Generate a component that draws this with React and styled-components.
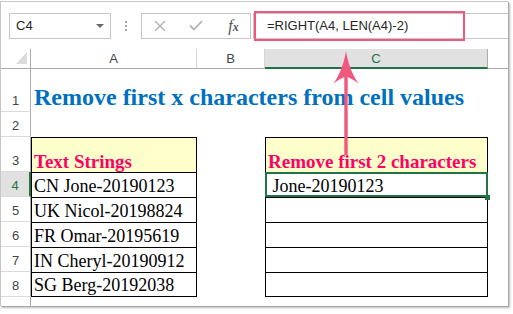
import React from "react"
import styled, { createGlobalStyle, css } from "styled-components"

const GREEN = "#217346"
const PINK = "#f0597f"

const GlobalStyle = createGlobalStyle`
  html, body {
    margin: 0;
    padding: 0;
    background: #fff;
  }
  body {
    width: 513px;
    height: 314px;
    overflow: hidden;
  }
`

const Window = styled.div`
  position: relative;
  box-sizing: border-box;
  margin-top: 1px;
  width: 508px;
  height: 305px;
  border-top: 1px solid #c6c6c6;
  border-left: 1px solid #c6c6c6;
  box-shadow: 1px 1px 0 #a9a9a9, 2px 2px 2px rgba(0, 0, 0, 0.28);
  display: flex;
  flex-direction: column;
  background: #fff;
  overflow: hidden;
`

const FormulaBar = styled.div`
  flex: none;
  height: 47px;
  display: flex;
  align-items: center;
  padding-left: 8px;
  font-family: "Liberation Sans", Arial, sans-serif;
  font-size: 13px;
  color: #262626;
`

const NameBox = styled.div`
  box-sizing: border-box;
  width: 102px;
  height: 26px;
  border: 1px solid #c6c6c6;
  display: flex;
  align-items: center;
  justify-content: space-between;
  padding: 0 6px 0 6px;
`

const DropArrow = styled.span`
  width: 0;
  height: 0;
  border-left: 4px solid transparent;
  border-right: 4px solid transparent;
  border-top: 4px solid #6a6a6a;
`

const Grip = styled.div`
  display: flex;
  flex-direction: column;
  gap: 2px;
  margin: 0 14px 0 14px;
  span {
    width: 2px;
    height: 2px;
    background: #a3a3a3;
  }
`

const ButtonBox = styled.div`
  box-sizing: border-box;
  width: 110px;
  height: 26px;
  border: 1px solid #c6c6c6;
  display: grid;
  grid-template-columns: repeat(3, 36px);
  align-items: center;
  justify-items: center;
`

const Fx = styled.span`
  font-family: "Liberation Serif", "Times New Roman", serif;
  font-style: italic;
  font-size: 16px;
  color: #555;
  margin-left: 3px;
  small {
    font-size: 12px;
    font-weight: bold;
  }
`

const FormulaBox = styled.div`
  position: relative;
  box-sizing: border-box;
  flex: 1;
  height: 26px;
  margin-left: 2px;
  border: 1px solid #c6c6c6;
  border-right: none;
  display: flex;
  align-items: center;
  padding-left: 13px;
  white-space: pre;
`

const Highlight = styled.div`
  position: absolute;
  left: 0;
  top: -3px;
  width: 211px;
  height: 30px;
  box-sizing: border-box;
  border: 2px solid ${PINK};
`

const Sheet = styled.div`
  flex: 1;
  min-height: 0;
  overflow: hidden;
  display: grid;
  grid-template-columns: 30px 166px 68px 223px 1fr;
  grid-template-rows: 20px 43px 25px 35px repeat(5, 25px) 25px;
`

const Corner = styled.div`
  box-sizing: border-box;
  border-right: 1px solid #ababab;
  border-bottom: 1px solid #ababab;
  display: flex;
  align-items: flex-end;
  justify-content: flex-end;
  padding: 0 3px 4px 0;
`

const Triangle = styled.div`
  width: 11px;
  height: 12px;
  background: #dcdcdc;
  clip-path: polygon(100% 0, 100% 100%, 0 100%);
`

const headFont = css`
  font-family: "Liberation Sans", Arial, sans-serif;
  font-size: 13px;
  line-height: 1;
  color: #444;
`

const ColHead = styled.div`
  box-sizing: border-box;
  ${headFont};
  display: flex;
  align-items: center;
  justify-content: center;
  border-bottom: 1px solid #ababab;
  border-right: ${p => (p.$last ? "none" : "1px solid #d6d6d6")};
  ${p =>
    p.$active &&
    css`
      background: #e1e1e1;
      color: ${GREEN};
      border-bottom: 2px solid ${GREEN};
      border-right: 1px solid #ababab;
    `}
`

const RowHead = styled.div`
  box-sizing: border-box;
  ${headFont};
  display: flex;
  align-items: flex-end;
  justify-content: center;
  padding-bottom: 4px;
  border-right: 1px solid #ababab;
  border-bottom: 1px solid #dadada;
  ${p =>
    p.$active &&
    css`
      background: #e1e1e1;
      color: ${GREEN};
      border-right: 2px solid ${GREEN};
    `}
`

const Cell = styled.div`
  box-sizing: border-box;
  min-width: 0;
  display: flex;
  align-items: flex-end;
  padding: 0 0 2px 2px;
  font-family: "Liberation Serif", "Times New Roman", serif;
  font-size: 18px;
  line-height: 1;
  color: #000;
  white-space: pre;
  background: ${p => (p.$fill ? "#ffffcc" : "transparent")};
  ${p =>
    p.$boxed &&
    css`
      border: 1px solid #000;
      border-bottom-width: ${p.$last ? "1px" : "0"};
    `}
  ${p =>
    p.$selected &&
    css`
      position: relative;
      &::before {
        content: "";
        position: absolute;
        top: -1px;
        left: -1px;
        right: -1px;
        bottom: 0;
        border: 2px solid ${GREEN};
      }
      &::after {
        content: "";
        position: absolute;
        right: -3px;
        bottom: -3px;
        width: 5px;
        height: 5px;
        background: ${GREEN};
      }
    `}
`

const Title = styled(Cell)`
  grid-column: span 4;
  padding: 0 0 3px 3px;
  font-size: 24px;
  font-weight: bold;
  color: #0070c0;
`

const HeaderCell = styled(Cell)`
  padding-bottom: 1px;
  font-size: 19px;
  font-weight: bold;
  color: #ff0066;
`

const Arrow = styled.svg`
  position: absolute;
  left: 329px;
  top: 46px;
  width: 32px;
  height: 112px;
  pointer-events: none;
`

const strings = [
  "CN Jone-20190123",
  "UK Nicol-20198824",
  "FR Omar-20195619",
  "IN Cheryl-20190912",
  "SG Berg-20192038",
]

const results = [" Jone-20190123", "", "", "", ""]

export default function App() {
  return (
    <>
      <GlobalStyle />
      <Window>
        <FormulaBar>
          <NameBox>
            C4
            <DropArrow />
          </NameBox>
          <Grip>
            <span />
            <span />
            <span />
          </Grip>
          <ButtonBox>
            <svg width="12" height="12" viewBox="0 0 12 12">
              <path d="M1 1 L11 11 M11 1 L1 11" stroke="#b3b3b3" strokeWidth="1.4" fill="none" />
            </svg>
            <svg width="14" height="11" viewBox="0 0 14 11">
              <path d="M1 5.5 L5 9.5 L13 1" stroke="#b3b3b3" strokeWidth="1.8" fill="none" />
            </svg>
            <Fx>
              f<small>x</small>
            </Fx>
          </ButtonBox>
          <FormulaBox>
            <Highlight />
            =RIGHT(A4, LEN(A4)-2)
          </FormulaBox>
        </FormulaBar>

        <Sheet>
          <Corner>
            <Triangle />
          </Corner>
          <ColHead>A</ColHead>
          <ColHead>B</ColHead>
          <ColHead $active>C</ColHead>
          <ColHead $last />

          <RowHead>1</RowHead>
          <Title>Remove first x characters from cell values</Title>

          <RowHead>2</RowHead>
          <Cell />
          <Cell />
          <Cell />
          <Cell />

          <RowHead>3</RowHead>
          <HeaderCell $boxed $fill>
            Text Strings
          </HeaderCell>
          <Cell />
          <HeaderCell $boxed $fill>
            Remove first 2 characters
          </HeaderCell>
          <Cell />

          {strings.map((text, i) => (
            <React.Fragment key={text}>
              <RowHead $active={i === 0}>{i + 4}</RowHead>
              <Cell $boxed $last={i === strings.length - 1}>
                {text}
              </Cell>
              <Cell />
              <Cell $boxed $last={i === strings.length - 1} $selected={i === 0}>
                {results[i]}
              </Cell>
              <Cell />
            </React.Fragment>
          ))}

          <RowHead>9</RowHead>
          <Cell />
          <Cell />
          <Cell />
          <Cell />
        </Sheet>

        <Arrow viewBox="0 0 32 112">
          <path
            d="M16 3 C17.5 12 21 25 28.5 35.5 Q22.5 31 17.7 29 L17.7 107 L14.3 107 L14.3 29 Q9.5 31 3.5 35.5 C11 25 14.5 12 16 3 Z"
            fill={PINK}
          />
        </Arrow>
      </Window>
    </>
  )
}
